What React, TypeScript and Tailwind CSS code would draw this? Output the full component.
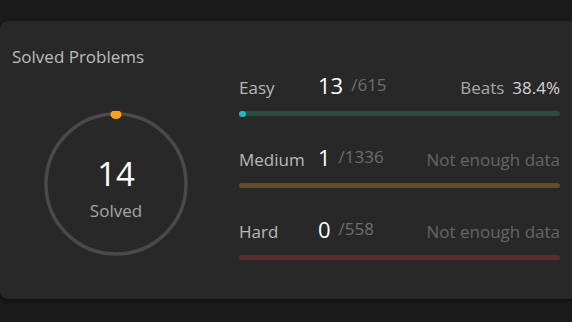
import React from "react";

const font = { fontFamily: '"Open Sans", "Noto Sans", sans-serif' };

type Row = {
  label: string;
  solved: number;
  total: number;
  track: string;
  fill: string;
  pct: number;
  beats?: string;
};

const rows: Row[] = [
  { label: "Easy", solved: 13, total: 615, track: "bg-[#2a4d3c]", fill: "bg-[#1cbaba]", pct: 13 / 615, beats: "38.4%" },
  { label: "Medium", solved: 1, total: 1336, track: "bg-[#5c4f2c]", fill: "bg-[#ffb800]", pct: 0 },
  { label: "Hard", solved: 0, total: 558, track: "bg-[#5a2d2f]", fill: "bg-[#ef4743]", pct: 0 },
];

const Ring = () => (
  <div className="relative w-[146px] h-[146px]">
    <svg width="146" height="146" viewBox="0 0 146 146" className="absolute inset-0">
      <circle cx="73" cy="73" r="70" fill="none" stroke="#4a4a4a" strokeWidth="3.5" />
      <ellipse cx="73" cy="3.5" rx="5.5" ry="4.5" fill="#ffa116" />
    </svg>
    <div className="absolute inset-0 flex flex-col items-center pt-[46px]">
      <div className="text-[33px] leading-none text-white">14</div>
      <div className="text-[17px] leading-[24px] text-[#a6a6a6] mt-[9px]">Solved</div>
    </div>
  </div>
);

export default function App() {
  return (
    <div className="w-[572px] h-[322px] bg-[#1a1a1a] overflow-hidden pt-[21px]" style={font}>
      <div className="w-[590px] h-[278px] bg-[#282828] rounded-lg flex pl-[12px] shadow-[0_2px_4px_rgba(0,0,0,0.4)]">
        <div className="w-[208px] flex flex-col">
          <div className="text-[17px] text-[#bdbdbd] mt-[25px] leading-[22px]">Solved Problems</div>
          <div className="flex justify-center mt-[43px]">
            <Ring />
          </div>
        </div>
        <div className="ml-[19px] w-[321px] flex flex-col pt-[53px] gap-[30px]">
          {rows.map((r) => (
            <div key={r.label} className="flex flex-col gap-[9px]">
              <div className="flex items-baseline h-[28px]">
                <span className="w-[79px] text-[17px] text-[#bababa]">{r.label}</span>
                <span className="text-[22px] text-white leading-none">{r.solved}</span>
                <span className="ml-[8px] text-[17px] text-[#6e6e6e] relative top-[-3px]">/{r.total}</span>
                <span className="ml-auto text-[17px]">
                  {r.beats ? (
                    <>
                      <span className="text-[#a8a8a8]">Beats</span>
                      <span className="ml-[8px] text-[#d4d4d4]">{r.beats}</span>
                    </>
                  ) : (
                    <span className="text-[#666666]">Not enough data</span>
                  )}
                </span>
              </div>
              <div className={`relative h-[5px] rounded-full ${r.track}`}>
                {r.pct > 0 && (
                  <div
                    className={`absolute left-0 top-[-0.5px] h-[6px] rounded-full ${r.fill}`}
                    style={{ width: `${Math.max(6, r.pct * 321)}px` }}
                  />
                )}
              </div>
            </div>
          ))}
        </div>
      </div>
    </div>
  );
}
